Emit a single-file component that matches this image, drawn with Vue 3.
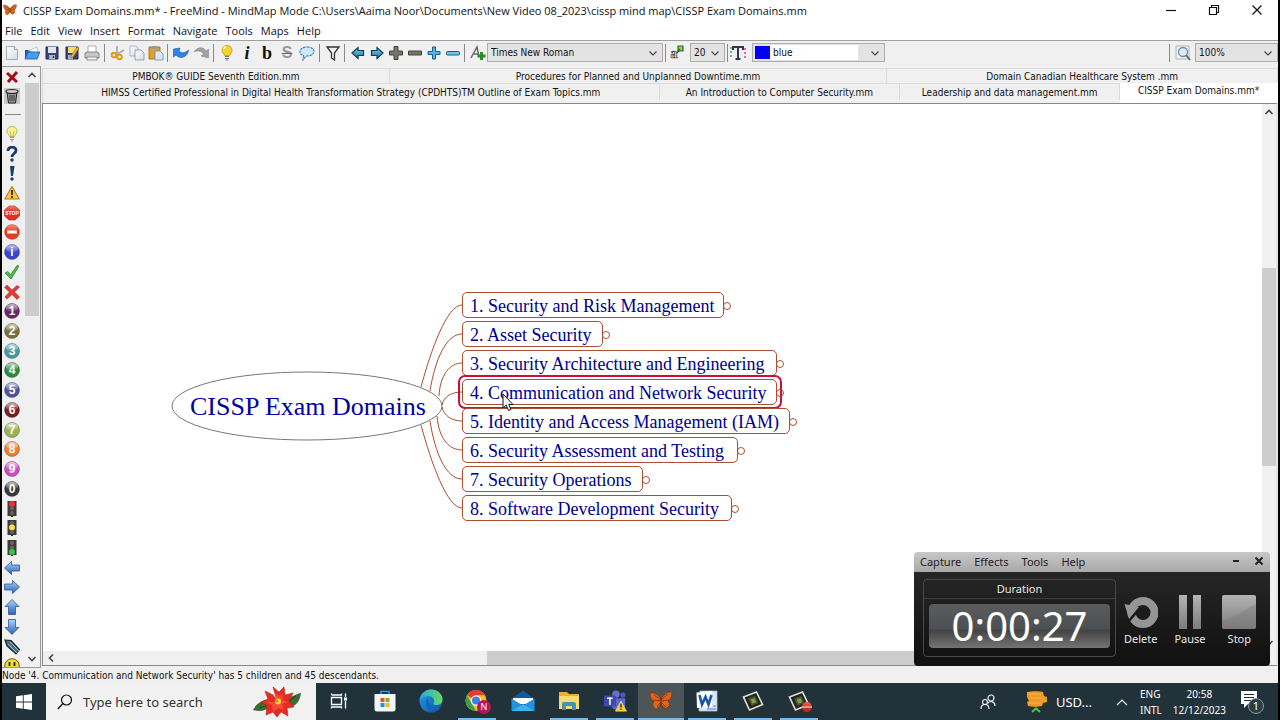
<template>
  <div class="desktop">
    <svg class="sprite" width="0" height="0" aria-hidden="true">
      <defs>
        <linearGradient id="gBlue" x1="0" y1="0" x2="0" y2="1">
          <stop offset="0" stop-color="#a8d4fa" />
          <stop offset="1" stop-color="#2a62b8" />
        </linearGradient>
        <linearGradient id="gTeal" x1="0" y1="0" x2="0" y2="1">
          <stop offset="0" stop-color="#7cc8e8" />
          <stop offset="1" stop-color="#1e78a8" />
        </linearGradient>
        <linearGradient id="gGrey" x1="0" y1="0" x2="0" y2="1">
          <stop offset="0" stop-color="#b4b4b4" />
          <stop offset="1" stop-color="#7c7c7c" />
        </linearGradient>
        <linearGradient id="gShine" x1="0" y1="0" x2="0" y2="1">
          <stop offset="0" stop-color="#fff" stop-opacity=".7" />
          <stop offset="1" stop-color="#fff" stop-opacity="0" />
        </linearGradient>
        <linearGradient id="gPage" x1="0" y1="0" x2="1" y2="1">
          <stop offset="0" stop-color="#fff" />
          <stop offset="1" stop-color="#d4dae6" />
        </linearGradient>
        <linearGradient id="gEdge" x1="0" y1="0" x2="1" y2="1">
          <stop offset="0" stop-color="#2ba0e8" />
          <stop offset="1" stop-color="#0c4fa0" />
        </linearGradient>
        <linearGradient id="gEdgeTop" x1="0" y1="0" x2="1" y2="0">
          <stop offset="0" stop-color="#2aa8e0" />
          <stop offset="1" stop-color="#64d860" />
        </linearGradient>
      </defs>

      <symbol id="butterfly" viewBox="0 0 24 20">
        <path d="M12 8C9 3 5 1 1 2c0 4 1 7 4 8-2 3-1 7 2 8 2 0 4-3 5-6 1 3 3 6 6 5 3-2 3-5 1-7 3-2 4-5 4-9-4-1-8 2-11 7z" fill="#e0661c" stroke="#7a3410" stroke-width=".8" />
        <path d="M12 7v8M12 9 5 4M12 10 5 9M12 11l-4 5M12 9l7-6M12 10l8-1M12 11l5 5" stroke="#7a2c08" stroke-width=".8" fill="none" />
      </symbol>
      <symbol id="new" viewBox="0 0 16 16">
        <path d="M2.500 1.500h8l3 3v10h-11z" fill="url(#gPage)" stroke="#a4aab8" />
        <path d="M10.500 1.500v3h3" fill="#fff" stroke="#a4aab8" />
      </symbol>
      <symbol id="open" viewBox="0 0 16 16">
        <path d="M1 13V5h5l1 2h6v6z" fill="#1e5cb0" />
        <path d="M4 6 13 2l1 6z" fill="#fff" stroke="#8ab" stroke-width=".6" />
        <path d="M1 14 4 7h12l-3 7z" fill="#4a9cf0" stroke="#1c58a8" stroke-width=".8" />
      </symbol>
      <symbol id="save" viewBox="0 0 16 16">
        <path d="M2 2h12v12H2z" fill="#3c4474" stroke="#242a4c" />
        <path d="M4 2h8v6H4z" fill="#dfe4f0" />
        <path d="M5 10h6v4H5z" fill="#aab0c4" />
        <path d="M9 11h1v2H9z" fill="#222" />
      </symbol>
      <symbol id="saveas" viewBox="0 0 16 16">
        <path d="M2 2h12v12H2z" fill="#3c4474" stroke="#242a4c" />
        <path d="M4 2h8v6H4z" fill="#f2dc78" />
        <path d="M4 10h5v4H4z" fill="#aab0c4" />
        <path d="m7 11 6-9 2 1-6 9-2 1z" fill="#f4b828" stroke="#96640c" stroke-width=".6" />
      </symbol>
      <symbol id="print" viewBox="0 0 16 16">
        <path d="M4 1h8v7H4z" fill="#fff" stroke="#999" stroke-width=".8" />
        <path d="M1 8l2-1h10l2 1v5H1z" fill="#c8c8c8" stroke="#707070" stroke-width=".8" />
        <path d="M3 12h10v3H3z" fill="#f0f0f0" stroke="#808080" stroke-width=".8" />
      </symbol>
      <symbol id="cut" viewBox="0 0 16 16">
        <path d="M7 1v8M14 5 6 10" stroke="#a4acb8" stroke-width="1.800" />
        <circle cx="4" cy="10" r="2.300" fill="none" stroke="#e09a1c" stroke-width="2" />
        <circle cx="9.500" cy="12" r="2.300" fill="none" stroke="#e09a1c" stroke-width="2" />
      </symbol>
      <symbol id="copy" viewBox="0 0 16 16">
        <path d="M1 1h6l2 2v8H1z" fill="url(#gPage)" stroke="#9aa2b8" stroke-width=".8" />
        <path d="M6 5h6l3 3v7H6z" fill="url(#gPage)" stroke="#8890a8" stroke-width=".8" />
      </symbol>
      <symbol id="paste" viewBox="0 0 16 16">
        <path d="M1 2h11v12H1z" fill="#e0a030" stroke="#986418" stroke-width=".8" />
        <path d="M4 1h5v3H4z" fill="#9a9a9a" />
        <path d="M7 6h5l3 3v6H7z" fill="#dce8fa" stroke="#7088b0" stroke-width=".8" />
      </symbol>
      <symbol id="undo" viewBox="0 0 16 16">
        <path d="M.5 4 7 3 6 6c3 3 6 2 9.500-1C15 12 7 15 3 10L.5 12z" fill="#2c84e4" stroke="#1858b0" stroke-width=".6" />
      </symbol>
      <symbol id="redo" viewBox="0 0 16 16">
        <path d="M1 7c3-5 9-6 12-1l2.500-2v9L8 11l2.500-2C9 6 5 5 1 7z" fill="#a0a0a0" stroke="#888" stroke-width=".6" />
      </symbol>
      <symbol id="bulb" viewBox="0 0 16 16">
        <path d="M8 .5c-3 0-5 2-5 5 0 2 2 3 2.500 5h5C11 8.500 13 7.500 13 5.500c0-3-2-5-5-5z" fill="#f8d428" stroke="#c09410" stroke-width=".8" />
        <path d="M5 4c0-1 1-2 2-2" stroke="#fff" stroke-width="1.500" fill="none" />
        <path d="M6 11.500h4M6 13.500h4M7 15h2" stroke="#777" stroke-width="1.200" />
      </symbol>
      <symbol id="bulblight" viewBox="0 0 16 16">
        <path d="M8 .5c-3 0-5 2-5 5 0 2 2 3 2.500 5h5C11 8.500 13 7.500 13 5.500c0-3-2-5-5-5z" fill="#f8f490" stroke="#b0a840" stroke-width=".8" />
        <path d="M6 5l1 5M10 5l-1 5" stroke="#b8a840" stroke-width=".8" />
        <path d="M6 11.500h4M6 13.500h4M7 15h2" stroke="#999" stroke-width="1.200" />
      </symbol>
      <symbol id="cloud" viewBox="0 0 16 16">
        <path d="M8 2c4 0 7 2 7 4.500S12 11 8 11l-1 0-3 4 .5-4.500C2 10 1 8.500 1 6.500 1 4 4 2 8 2z" fill="#cfe8f8" stroke="#3a7cb0" stroke-width="1.100" stroke-dasharray="2.500 .8" />
      </symbol>
      <symbol id="filter" viewBox="0 0 16 16">
        <path d="M2 2h12L9.500 8v7L6.500 13V8z" fill="#eee" stroke="#333" stroke-width="1.300" />
      </symbol>
      <symbol id="left" viewBox="0 0 16 16">
        <path d="m2 8 6-5.500V5.500h5.500v5H8v3z" fill="url(#gTeal)" stroke="#0e3c5c" stroke-width="1.200" />
      </symbol>
      <symbol id="right" viewBox="0 0 16 16">
        <path d="M14 8 8 2.500V5.500H2.500v5H8v3z" fill="url(#gTeal)" stroke="#0e3c5c" stroke-width="1.200" />
      </symbol>
      <symbol id="plusgrey" viewBox="0 0 16 16">
        <path d="M6 1.500h4V6h4.500v4H10v4.500H6V10H1.500V6H6z" fill="#77756a" stroke="#45443c" />
      </symbol>
      <symbol id="minusgrey" viewBox="0 0 16 16">
        <path d="M1.500 6h13v4h-13z" fill="#77756a" stroke="#45443c" />
      </symbol>
      <symbol id="plusblue" viewBox="0 0 16 16">
        <path d="M6.500 2h3v4.500H14v3H9.500V14h-3V9.500H2v-3h4.500z" fill="#5cb4e0" stroke="#185c88" />
      </symbol>
      <symbol id="minusblue" viewBox="0 0 16 16">
        <rect x="1.500" y="6.500" width="13" height="3.500" rx="1" fill="#7cc4e4" stroke="#185c88" />
      </symbol>
      <symbol id="fontadd" viewBox="0 0 16 16">
        <path d="M1 13 7 2l2 10M4 9h4" fill="none" stroke="#666" stroke-width="1.500" />
        <path d="M11.500 7v8M7.500 11h8" stroke="#2c8c2c" stroke-width="3" />
      </symbol>
      <symbol id="fontsize" viewBox="0 0 16 16">
        <path d="M10 1h5v5h-5z" fill="#9c6" stroke="#2c6c14" stroke-width="1.200" />
        <path d="m9 8 3-4" stroke="#2c6c14" stroke-width="1.500" />
      </symbol>
      <symbol id="textcolor" viewBox="0 0 16 16">
        <path d="M3 5V2h10v3M8 2v12M5.500 14h5" fill="none" stroke="#2c3c50" stroke-width="2" />
        <path d="M1 2v12" stroke="#4a4" stroke-width="1.500" stroke-dasharray="2 2" />
        <path d="M15 3v12" stroke="#d48" stroke-width="1.500" stroke-dasharray="2 2" />
      </symbol>
      <symbol id="zoompage" viewBox="0 0 16 16">
        <path d="M1 1h13v13H1z" fill="#f4f4f4" stroke="#9aa4b4" stroke-width=".8" />
        <circle cx="8" cy="7" r="4.500" fill="#d8ecfa" stroke="#7488a4" stroke-width="1.300" />
        <path d="m11 10 4 5" stroke="#667" stroke-width="2" />
      </symbol>
      <symbol id="cross" viewBox="0 0 16 16">
        <path d="m3 4 10 9M13 3 4 13" stroke="#a80c14" stroke-width="3" />
      </symbol>
      <symbol id="trash" viewBox="0 0 16 16">
        <path d="M0 0h16v16H0z" fill="#c8c8c8" />
        <path d="m3 4 1.500 11h7L13 4z" fill="#999" stroke="#222" />
        <ellipse cx="8" cy="3.500" rx="6" ry="2" fill="#ccc" stroke="#222" stroke-width="1.200" />
        <path d="M6 7v6M8 7v6M10 7v6" stroke="#333" />
      </symbol>
      <symbol id="question" viewBox="0 0 16 16">
        <path d="M4 5c0-5 8-5 8-.5C12 7.500 8 7.500 8 11" fill="none" stroke="#1c3c68" stroke-width="2.800" />
        <circle cx="8" cy="14" r="1.700" fill="#1c3c68" />
      </symbol>
      <symbol id="bang" viewBox="0 0 16 16">
        <path d="M6 1h4.500L9 11H7z" fill="#1c3c68" />
        <circle cx="8" cy="14" r="1.700" fill="#1c3c68" />
      </symbol>
      <symbol id="warn" viewBox="0 0 16 16">
        <path d="M8 1.500 15.200 14H.8z" fill="#f8c848" stroke="#b87c18" stroke-width="1.100" stroke-linejoin="round" />
        <path d="M8 5v5M8 11v2" stroke="#222" stroke-width="1.700" />
      </symbol>
      <symbol id="stopsign" viewBox="0 0 16 16">
        <path d="M5 1h6l4.500 4v6L11 15H5L.5 11V5z" fill="#e03028" stroke="#b01c18" stroke-width=".6" />
        <path d="M5 1h6l4 4v2H1V5z" fill="url(#gShine)" opacity=".5" />
      </symbol>
      <symbol id="noentry" viewBox="0 0 16 16">
        <circle cx="8" cy="8" r="7.300" fill="#e83c20" stroke="#b82c18" stroke-width=".6" />
        <rect x="3" y="6.500" width="10" height="3" fill="#fff" />
        <ellipse cx="8" cy="4.500" rx="5.500" ry="3.500" fill="url(#gShine)" opacity=".6" />
      </symbol>
      <symbol id="check" viewBox="0 0 16 16">
        <path d="m1 9 3-1.500L6.500 11 13 1.500 15 2 7 15z" fill="#48c048" stroke="#1c7c24" stroke-width=".7" />
      </symbol>
      <symbol id="redx" viewBox="0 0 16 16">
        <path d="M.5 3.500 3 1l5 5 5-4.500L15.500 3 10.500 8l5 5-2.500 2.500-5-5-5 4.500-2-2L5.500 8z" fill="#dc3c38" stroke="#b02424" stroke-width=".6" />
      </symbol>
      <symbol id="arrowleft" viewBox="0 0 16 16">
        <path d="M.5 8 7.500 1.500v3.500h8v6h-8v3.500z" fill="url(#gBlue)" stroke="#30588c" stroke-width=".8" />
      </symbol>
      <symbol id="arrowright" viewBox="0 0 16 16">
        <path d="M15.500 8 8.500 1.500v3.500h-8v6h8v3.500z" fill="url(#gBlue)" stroke="#30588c" stroke-width=".8" />
      </symbol>
      <symbol id="arrowup" viewBox="0 0 16 16">
        <path d="M8 .5 15 7.500h-3.500v8h-7v-8H1z" fill="url(#gBlue)" stroke="#30588c" stroke-width=".8" />
      </symbol>
      <symbol id="arrowdown" viewBox="0 0 16 16">
        <path d="M8 15.500 15 8.500h-3.500v-8h-7v8H1z" fill="url(#gBlue)" stroke="#30588c" stroke-width=".8" />
      </symbol>
      <symbol id="pencil" viewBox="0 0 16 16">
        <path d="m1 1 6 .5 8.500 9-3.500 4.500L3 7z" fill="#4a6c7c" stroke="#142430" stroke-width="1.200" />
        <path d="m4 5 9 9M6 3l9 9" stroke="#bcd0d8" stroke-width=".8" />
      </symbol>
      <symbol id="smile" viewBox="0 0 16 16">
        <circle cx="8" cy="8" r="7.300" fill="#f4dc30" stroke="#6c5c08" stroke-width="1" />
        <path d="M5.500 4v4M10.500 4v4" stroke="#222" stroke-width="1.800" />
        <path d="M4 10c2 3 6 3 8 0" stroke="#222" fill="none" />
      </symbol>
      <symbol id="search" viewBox="0 0 16 16">
        <circle cx="9.500" cy="6" r="5" fill="none" stroke="#111" stroke-width="1.200" />
        <path d="M6 9.500.8 15" stroke="#111" stroke-width="1.300" />
      </symbol>
      <symbol id="poinsettia" viewBox="0 0 50 32">
        <path d="M16 14C8 14 3 20 1 24c7 2 13 1 17-4zM34 12c6-1 10-4 15-5-1 8-5 14-13 14z" fill="#3c6c34" />
        <path d="M8 22l10-4M44 10l-8 6" stroke="#1c4420" />
        <path d="m25 15-4-14 6 5 5-5 1 8 8-2-4 8 5 6-7 1 1 8-7-4-4 5-4-5-7 3 1-9-6-4 7-3-3-8 8 4z" fill="#e42c20" stroke="#c01c14" stroke-width=".6" />
        <path d="m25 16-2-9 4 3 4-3-1 7 6 2-6 2 2 6-6-2-5 4-1-7-6-3z" fill="#f44c38" />
        <circle cx="26" cy="15.500" r="3" fill="#f4cc30" />
        <circle cx="25" cy="15" r="1" fill="#a06c10" />
      </symbol>
      <symbol id="windows" viewBox="0 0 16 16">
        <path d="M0 2.300 6.800 1.300v6.200H0zM7.700 1.200 16 0v7.500H7.700zM0 8.400h6.800v6.300L0 13.700zM7.700 8.400H16V16l-8.300-1.200z" fill="#fff" />
      </symbol>
      <symbol id="taskview" viewBox="0 0 24 24">
        <path d="M4.500 8.500h10v7h-10zM4.500 6V4.500M4.500 6h10V4.500M4.500 19.500V18h10v1.500" fill="none" stroke="#fff" stroke-width="1.300" />
        <path d="M18.500 4.500V8M18.500 12v7.500" stroke="#fff" stroke-width="1.300" />
        <path d="M17 8.500h3v3h-3z" fill="#fff" />
      </symbol>
      <symbol id="store" viewBox="0 0 24 24">
        <path d="M8 6V2.500h8V6" fill="none" stroke="#2a9ce0" stroke-width="1.600" />
        <path d="M1.500 5h21v15a2.500 2.500 0 0 1-2.500 2.500H4A2.500 2.500 0 0 1 1.500 20z" fill="#f4f6f8" />
        <path d="M7.500 9h4v4h-4z" fill="#e85428" />
        <path d="M12.500 9h4v4h-4z" fill="#84b41c" />
        <path d="M7.500 14h4v4h-4z" fill="#1c94dc" />
        <path d="M12.500 14h4v4h-4z" fill="#f4b41c" />
      </symbol>
      <symbol id="edge" viewBox="0 0 24 24">
        <circle cx="12" cy="12" r="11.500" fill="url(#gEdge)" />
        <path d="M.6 11C2 4 7 .5 12 .5c7 0 12 5 11.500 10.500-.3 4-4 5.500-7.500 5-2-.3-2-1.500-1-3C16 10 13 6.500 9 7c-4 .5-7 2-8.400 4z" fill="url(#gEdgeTop)" />
        <path d="M9 9c-4 4-2 11 4 13 4 0 7-2 8.500-4-6 2.500-13-1-12.500-9z" fill="#1264b8" />
      </symbol>
      <symbol id="chrome" viewBox="0 0 24 24">
        <circle cx="11" cy="11.500" r="10.500" fill="#fbbc1c" />
        <path d="M11 11.500 1.900 6.300A10.500 10.500 0 0 1 20.100 6.300H11z" fill="#e43c30" />
        <path d="M1.900 6.300 7 15l4 7A10.500 10.500 0 0 1 1.900 6.300z" fill="#34a050" />
        <circle cx="11" cy="11.500" r="5.200" fill="#fff" />
        <circle cx="11" cy="11.500" r="4" fill="#3c80e8" />
      </symbol>
      <symbol id="mail" viewBox="0 0 24 24">
        <path d="M.5 10 12 1.500 23.500 10v4H.5z" fill="#0c5ca4" />
        <path d="M2 9h20v6H2z" fill="#fff" />
        <path d="M.5 9.500 12 16.500l11.500-7V22H.5z" fill="#1c94e0" />
        <path d="M.5 22 12 15l11.500 7z" fill="#38b4f0" />
      </symbol>
      <symbol id="explorer" viewBox="0 0 24 24">
        <path d="M2 3h8l2 2h10v15H2z" fill="#e8b030" />
        <path d="M2 7h20v13H2z" fill="#fcd870" />
        <path d="M5 21v-6a2 2 0 0 1 2-2h10a2 2 0 0 1 2 2v6h-4v-4H9v4z" fill="#3c94b8" />
      </symbol>
      <symbol id="teams" viewBox="0 0 26 24">
        <circle cx="14" cy="4.500" r="4" fill="#6870d0" />
        <circle cx="21.500" cy="5.500" r="2.800" fill="#5058c0" />
        <path d="M8 9h16v7c0 4-3 6-7 6s-8-2-8-6z" fill="#6068cc" />
        <rect x="1" y="6" width="13" height="12" rx="1.500" fill="#4048b0" />
        <path d="M4.500 9h6M7.500 9v7" stroke="#fff" stroke-width="1.700" />
        <path d="M19.500 12 25.500 23h-12z" fill="#f8c828" stroke="#fbe9a0" stroke-width=".6" />
        <path d="M19.500 15v4M19.500 20v1.500" stroke="#222" stroke-width="1.400" />
      </symbol>
      <symbol id="word" viewBox="0 0 24 24">
        <path d="M5 2h17v20H4z" fill="#dce8f6" stroke="#a8bcd8" stroke-width=".8" />
        <path d="M1.500 3.500 17 2v16l-15 1z" fill="#fff" />
        <path d="m4.500 6 2.500 9.500L10.500 8l3 7.500L16.500 6" fill="none" stroke="#1c54a4" stroke-width="2.600" />
        <path d="M12 20h9M18 17h3" stroke="#7ca4d8" stroke-width="1.500" />
      </symbol>
      <symbol id="camtasia" viewBox="0 0 24 24">
        <path d="M2.500 8 15.500 3l6 12.500L8.500 21z" fill="#20241c" stroke="#dcdcd4" stroke-width="1.700" />
        <path d="M7 9.500 14 7l3.500 7-7 3z" fill="#44582c" />
        <path d="m10 10 4-.5 1 4-4 1z" fill="#88984c" />
      </symbol>
      <symbol id="people" viewBox="0 0 16 16">
        <circle cx="11" cy="4" r="3" fill="none" stroke="#eee" stroke-width="1.200" />
        <circle cx="5" cy="8" r="2.500" fill="none" stroke="#eee" stroke-width="1.200" />
        <path d="M1 15c0-6 8-6 8 0M8 9c3-3 7-1 7 3" fill="none" stroke="#eee" stroke-width="1.200" />
      </symbol>
      <symbol id="coins" viewBox="0 0 22 22">
        <path d="M2 1c5-1 13-1 16 0l1 4 3 1v5l-4 1-1 3c-4 1-10 1-14 0l-1-4 2-1-2-4z" fill="#f09a24" />
        <path d="M4 3h12M5 7h14M4 12h12" stroke="#f6ac40" stroke-width="1.500" />
        <path d="m7 21 4-3.500 4 3.500" fill="none" stroke="#54c42c" stroke-width="2.200" />
      </symbol>
      <symbol id="notes" viewBox="0 0 26 26">
        <path d="M2 2h16v13h-9l-4 4v-4H2z" fill="#fff" />
        <path d="M5 5.500h10M5 8.500h10M5 11.500h7" stroke="#1c2c34" stroke-width="1.200" />
      </symbol>
      <symbol id="chevdown" viewBox="0 0 10 10">
        <path d="m1.500 3.500 3.500 3.500 3.500-3.500" fill="none" stroke="#444" stroke-width="1.200" />
      </symbol>
      <symbol id="chevup" viewBox="0 0 10 10">
        <path d="m1.500 7 3.500-3.500L8.500 7" fill="none" stroke="currentColor" stroke-width="1.600" />
      </symbol>
    </svg>

    <header class="titlebar">
      <svg class="app-icon"><use href="#butterfly" /></svg>
      <span class="title">CISSP Exam Domains.mm* - FreeMind - MindMap Mode C:\Users\Aaima Noor\Documents\New Video 08_2023\cissp mind map\CISSP Exam Domains.mm</span>
      <div class="window-buttons">
        <button aria-label="Minimize">
          <svg viewBox="0 0 12 12"><path d="M1 6.500h10" /></svg>
        </button>
        <button aria-label="Restore">
          <svg viewBox="0 0 12 12"><path d="M1.500 3.500h7v7h-7zM3.500 3.500v-2h7v7h-2" /></svg>
        </button>
        <button aria-label="Close">
          <svg viewBox="0 0 12 12"><path d="m1.500 1.500 9 9M10.500 1.500l-9 9" /></svg>
        </button>
      </div>
    </header>

    <nav class="menubar">
      <button v-for="item in menus" :key="item">{{ item }}</button>
    </nav>

    <div class="toolbar">
      <div v-for="(group, i) in toolGroups" :key="i" class="tools" :class="{ tight: group.tight }">
        <button v-for="icon in group.icons" :key="icon" :aria-label="icon">
          <span v-if="letters[icon]" class="letter" :class="icon">{{ letters[icon] }}</span>
          <svg v-else class="icon"><use :href="'#' + icon" /></svg>
        </button>
      </div>
      <label class="combo combo-font">
        <select v-model="font" aria-label="Font">
          <option>Times New Roman</option>
        </select>
        <svg class="chev"><use href="#chevdown" /></svg>
      </label>
      <div class="tools tool-pre">
        <button aria-label="Font size">
          <svg class="icon" viewBox="0 0 16 16">
            <text x="6" y="13" text-anchor="middle" font-family="Liberation Serif, serif" font-size="14" font-weight="bold" fill="#ddd" stroke="#444" stroke-width=".7">a</text>
            <use href="#fontsize" />
          </svg>
        </button>
      </div>
      <label class="combo combo-size">
        <select v-model="size" aria-label="Size">
          <option>20</option>
        </select>
        <svg class="chev"><use href="#chevdown" /></svg>
      </label>
      <div class="tools tool-pre">
        <button aria-label="Text color"><svg class="icon"><use href="#textcolor" /></svg></button>
      </div>
      <label class="combo combo-color">
        <span class="swatch"></span>
        <select v-model="color" aria-label="Color">
          <option>blue</option>
        </select>
        <svg class="chev"><use href="#chevdown" /></svg>
      </label>
      <div class="tools tool-zoom">
        <button aria-label="Zoom"><svg class="icon"><use href="#zoompage" /></svg></button>
      </div>
      <label class="combo combo-zoom">
        <select v-model="zoom" aria-label="Zoom level">
          <option>100%</option>
        </select>
        <svg class="chev"><use href="#chevdown" /></svg>
      </label>
    </div>

    <div class="workspace">
      <aside class="sidebar">
        <div class="palette">
          <div class="palette-top">
            <button aria-label="Remove last icon"><svg class="icon"><use href="#cross" /></svg></button>
            <button aria-label="Remove all icons"><svg class="icon"><use href="#trash" /></svg></button>
          </div>
          <hr />
          <div class="palette-list">
            <button v-for="(item, i) in palette" :key="i" :aria-label="item.name">
              <svg v-if="item.ball" class="icon" viewBox="0 0 16 16">
                <circle cx="8" cy="8" r="7.500" :fill="item.ball" stroke="#444" stroke-opacity=".5" stroke-width=".8" />
                <ellipse cx="8" cy="5" rx="6" ry="4" fill="url(#gShine)" />
                <text x="8" y="12" text-anchor="middle" font-family="Liberation Sans, sans-serif" font-size="12" font-weight="bold" fill="#fff">{{ item.text }}</text>
              </svg>
              <svg v-else-if="item.light" class="icon" viewBox="0 0 16 16">
                <rect x="3.500" y="0" width="9" height="15" fill="#3c3c34" />
                <path d="M7 15h2v1H7z" fill="#222" />
                <circle v-for="n in 3" :key="n" cx="8" :cy="n * 4.500 - 1.500" :r="n === item.lit ? 3 : 2" :fill="n === item.lit ? item.light : '#66665c'" />
              </svg>
              <svg v-else class="icon" viewBox="0 0 16 16">
                <use :href="'#' + item.name" />
                <text v-if="item.text" x="8" y="10" text-anchor="middle" font-family="Liberation Sans, sans-serif" font-size="5" font-weight="bold" fill="#fff">{{ item.text }}</text>
              </svg>
            </button>
          </div>
        </div>
        <div class="vscroll side-scroll">
          <svg class="arrow"><use href="#chevup" /></svg>
          <div class="track"><div class="thumb"></div></div>
          <svg class="arrow flip"><use href="#chevup" /></svg>
        </div>
      </aside>

      <main class="document">
        <div class="tabs tabs-top">
          <button v-for="tab in topTabs" :key="tab">{{ tab }}</button>
        </div>
        <div class="tabs tabs-bottom">
          <button v-for="tab in bottomTabs" :key="tab" :class="{ active: tab === currentTab }">{{ tab }}</button>
        </div>

        <div class="pane">
          <div class="canvas">
            <svg class="edges" width="800" height="500">
              <ellipse cx="264" cy="302" rx="135" ry="34" fill="#fff" stroke="#777" />
              <path v-for="d in edges" :key="d" :d="d" fill="none" stroke="#a85030" />
            </svg>
            <div class="root-node">CISSP Exam Domains</div>
            <ul class="nodes">
              <li
                v-for="node in nodes"
                :key="node.text"
                :class="{ selected: node.text === selected }"
                :style="{ width: node.width + 'px' }"
                @click="selected = node.text"
              >{{ node.text }}</li>
            </ul>
            <svg class="cursor" viewBox="0 0 12 19">
              <path d="M1 1v14l3.200-3L6.500 17.500 9 16.500 6.700 11.500H11z" fill="#fff" stroke="#111" />
            </svg>
          </div>
          <div class="vscroll map-scroll">
            <svg class="arrow"><use href="#chevup" /></svg>
            <div class="track"><div class="thumb"></div></div>
            <svg class="arrow flip"><use href="#chevup" /></svg>
          </div>
          <div class="hscroll">
            <svg class="arrow turn"><use href="#chevup" /></svg>
            <div class="thumb"></div>
          </div>
        </div>
      </main>
    </div>

    <footer class="status">Node '4. Communication and Network Security' has 5 children and 45 descendants.</footer>

    <section class="recorder">
      <div class="rec-menu">
        <button v-for="item in recMenus" :key="item">{{ item }}</button>
        <button class="rec-min" aria-label="Minimize recorder"><svg viewBox="0 0 10 10"><path d="M2 5h6" /></svg></button>
        <button class="rec-close" aria-label="Close recorder"><svg viewBox="0 0 10 10"><path d="m1.500 1.500 7 7M8.500 1.500l-7 7" /></svg></button>
      </div>
      <div class="rec-body">
        <div class="duration">
          <div class="duration-label">Duration</div>
          <div class="clock">0:00:27</div>
        </div>
        <button class="rec-btn">
          <svg viewBox="0 0 34 34">
            <circle cx="19" cy="17.500" r="11.500" fill="none" stroke="#959595" stroke-width="8" />
            <path d="M16 12 3 27" stroke="#181818" stroke-width="4" />
            <path d="M.5 9 15 12 5 24z" fill="#959595" />
          </svg>
          Delete
        </button>
        <button class="rec-btn">
          <svg viewBox="0 0 34 34"><path d="M6 0h8v34H6zM20 0h8v34h-8z" fill="url(#gGrey)" /></svg>
          Pause
        </button>
        <button class="rec-btn">
          <svg viewBox="0 0 34 34">
            <rect width="34" height="34" rx="2" fill="url(#gGrey)" />
            <path d="M0 26C10 24 24 14 34 9v23a2 2 0 0 1-2 2H2a2 2 0 0 1-2-2z" fill="#777" opacity=".4" />
          </svg>
          Stop
        </button>
      </div>
    </section>

    <footer class="taskbar">
      <button class="start" aria-label="Start"><svg><use href="#windows" /></svg></button>
      <label class="search">
        <svg class="search-icon"><use href="#search" /></svg>
        <input type="text" placeholder="Type here to search" aria-label="Search" />
        <svg class="flower"><use href="#poinsettia" /></svg>
      </label>
      <button v-for="app in apps" :key="app.name" class="app" :class="{ running: app.running, current: app.current }" :aria-label="app.name">
        <svg><use :href="'#' + app.icon" /></svg>
        <span v-if="app.profile" class="profile">{{ app.profile }}</span>
        <span v-if="app.recording" class="rec-badge"></span>
      </button>
      <div class="tray">
        <button class="people" aria-label="People"><svg><use href="#people" /></svg></button>
        <button class="currency"><svg><use href="#coins" /></svg>USD...</button>
        <button class="more" aria-label="Show hidden icons"><svg viewBox="0 0 12 8"><path d="m1 7 5-5 5 5" /></svg></button>
        <button class="lang"><span>ENG</span><span>INTL</span></button>
        <button class="time"><span>20:58</span><span>12/12/2023</span></button>
        <button class="notify" aria-label="Notifications">
          <svg><use href="#notes" /></svg>
          <span class="count">1</span>
        </button>
      </div>
    </footer>
  </div>
</template>

<script setup>
import { ref } from 'vue';

const menus = ['File', 'Edit', 'View', 'Insert', 'Format', 'Navigate', 'Tools', 'Maps', 'Help'];
const recMenus = ['Capture', 'Effects', 'Tools', 'Help'];

const font = ref('Times New Roman');
const size = ref('20');
const color = ref('blue');
const zoom = ref('100%');

const toolGroups = [
  { icons: ['new', 'open', 'save', 'saveas', 'print'] },
  { icons: ['cut', 'copy', 'paste'], tight: true },
  { icons: ['undo', 'redo'] },
  { icons: ['bulb', 'italic', 'bold', 'strike', 'cloud'] },
  { icons: ['filter'], tight: true },
  { icons: ['left', 'right', 'plusgrey', 'minusgrey', 'plusblue', 'minusblue'], tight: true },
  { icons: ['fontadd'], tight: true }
];
const letters = { italic: 'i', bold: 'b', strike: 'S' };

const palette = [
  { name: 'bulblight' },
  { name: 'question' },
  { name: 'bang' },
  { name: 'warn' },
  { name: 'stopsign', text: 'STOP' },
  { name: 'noentry' },
  { name: 'info', ball: '#3a44d0', text: 'i' },
  { name: 'check' },
  { name: 'redx' },
  { name: 'one', ball: '#6a2468', text: '1' },
  { name: 'two', ball: '#78703a', text: '2' },
  { name: 'three', ball: '#4498a0', text: '3' },
  { name: 'four', ball: '#2a8c3c', text: '4' },
  { name: 'five', ball: '#4c54a0', text: '5' },
  { name: 'six', ball: '#7a1c24', text: '6' },
  { name: 'seven', ball: '#98b44c', text: '7' },
  { name: 'eight', ball: '#f07c2c', text: '8' },
  { name: 'nine', ball: '#cc4cc8', text: '9' },
  { name: 'zero', ball: '#383838', text: '0' },
  { name: 'stop light', light: '#f03030', lit: 1 },
  { name: 'prepare light', light: '#f8e040', lit: 2 },
  { name: 'go light', light: '#30c850', lit: 3 },
  { name: 'arrowleft' },
  { name: 'arrowright' },
  { name: 'arrowup' },
  { name: 'arrowdown' },
  { name: 'pencil' },
  { name: 'smile' }
];

const topTabs = [
  'PMBOK® GUIDE Seventh Edition.mm',
  'Procedures for Planned and Unplanned Downtime.mm',
  'Domain Canadian Healthcare System .mm'
];
const bottomTabs = [
  'HIMSS Certified Professional in Digital Health Transformation Strategy (CPDHTS)TM Outline of Exam Topics.mm',
  'An Introduction to Computer Security.mm',
  'Leadership and data management.mm',
  'CISSP Exam Domains.mm*'
];
const currentTab = 'CISSP Exam Domains.mm*';

const nodes = [
  { text: '1. Security and Risk Management', width: 262 },
  { text: '2. Asset Security', width: 141 },
  { text: '3. Security Architecture and Engineering', width: 315 },
  { text: '4. Communication and Network Security', width: 315 },
  { text: '5. Identity and Access Management (IAM)', width: 328 },
  { text: '6. Security Assessment and Testing', width: 276 },
  { text: '7. Security Operations', width: 181 },
  { text: '8. Software Development Security', width: 270 }
];
const selected = ref(nodes[3].text);

// curves from the root ellipse to the left side of each node
const edges = [
  'M419 201C404 201 388 246 378 283',
  'M419 230C403 230 392 256 387 287',
  'M419 259C407 259 397 271 396 292',
  'M419 288C409 288 401 292 399 301',
  'M419 317C409 317 401 312 399 303',
  'M419 346C407 346 396 336 394 312',
  'M419 375C403 375 392 349 387 317',
  'M419 404C404 404 388 358 378 321'
];

const apps = [
  { name: 'Task View', icon: 'taskview' },
  { name: 'Store', icon: 'store' },
  { name: 'Edge', icon: 'edge' },
  { name: 'Chrome', icon: 'chrome', running: true, profile: 'N' },
  { name: 'Mail', icon: 'mail' },
  { name: 'File Explorer', icon: 'explorer', running: true },
  { name: 'Teams', icon: 'teams', running: true },
  { name: 'FreeMind', icon: 'butterfly', running: true, current: true },
  { name: 'Word', icon: 'word', running: true },
  { name: 'Camtasia', icon: 'camtasia', running: true },
  { name: 'Camtasia Recorder', icon: 'camtasia', running: true, recording: true }
];
</script>

<style>
body {
  margin: 0;
  overflow: hidden;
}
</style>

<style scoped>
* {
  box-sizing: border-box;
}

button {
  border: 0;
  margin: 0;
  padding: 0;
  background: none;
  font: inherit;
  color: inherit;
}

svg {
  display: block;
}

.sprite {
  position: absolute;
}

.desktop {
  position: relative;
  display: flex;
  flex-direction: column;
  height: 100vh;
  border-left: 2px solid #000;
  border-right: 2px solid #000;
  background: #f0f0f0;
  color: #111;
  font-family: "DejaVu Sans Condensed", "Noto Sans", sans-serif;
  font-size: 10px;
}

.titlebar {
  display: flex;
  align-items: center;
  height: 22px;
  padding-bottom: 2px;
  background: #fff;
  font-family: "Open Sans", "Noto Sans", sans-serif;
  font-size: 11px;
}

.app-icon {
  width: 14px;
  height: 14px;
  margin: 0 6px 0 1px;
}

.title {
  flex: 1;
  white-space: nowrap;
}

.window-buttons {
  display: flex;
}

.window-buttons button {
  display: flex;
  justify-content: center;
  width: 43px;
}

.window-buttons svg {
  width: 12px;
  height: 12px;
  fill: none;
  stroke: #111;
  stroke-width: 1.2;
}

.menubar {
  display: flex;
  align-items: center;
  gap: 8px;
  height: 18px;
  padding: 0 3px 2px;
  background: #fff;
  font-family: "Open Sans", "Noto Sans", sans-serif;
  font-size: 11px;
}

.toolbar {
  display: flex;
  align-items: center;
  height: 26px;
  padding-bottom: 2px;
  border-top: 1px solid #a0a0a0;
}

.tools {
  display: flex;
}

.tools button {
  display: flex;
  align-items: center;
  justify-content: center;
  width: 20px;
  height: 18px;
}

.tight button {
  width: 19px;
}

.tools + .tools,
.tool-zoom {
  padding-left: 3px;
  margin-left: 2px;
  border-left: 1px solid #888;
}

.tool-pre {
  margin: 0 4px 0 2px;
  border-left: 1px solid #888;
}

.icon {
  width: 16px;
  height: 16px;
}

.letter {
  font-family: "Liberation Serif", serif;
  font-size: 18px;
  font-weight: bold;
  line-height: 18px;
}

.italic {
  font-style: italic;
}

.strike {
  color: #999;
  font-family: "Liberation Sans", sans-serif;
  font-size: 16px;
  text-decoration: line-through #666;
}

.combo {
  display: flex;
  align-items: center;
  height: 19px;
  padding: 0 4px 0 3px;
  border: 1px solid #adadad;
  background: #e3e3e3;
}

.combo select {
  flex: 1;
  min-width: 0;
  height: 15px;
  padding: 0;
  border: 0;
  appearance: none;
  background: none;
  font: inherit;
  color: #111;
}

.chev {
  width: 10px;
  height: 10px;
}

.combo-font {
  width: 176px;
}

.combo-size {
  width: 35px;
}

.combo-color {
  width: 133px;
  padding-left: 1px;
}

.combo-color select {
  margin-right: 12px;
  padding-left: 3px;
  background: #fff;
}

.swatch {
  width: 15px;
  height: 13px;
  margin-left: 1px;
  background: #0000f8;
}

.tool-zoom {
  margin-left: auto;
}

.combo-zoom {
  width: 83px;
  margin-left: 2px;
}

.workspace {
  display: flex;
  flex: 1;
  min-height: 0;
}

.sidebar {
  display: flex;
  width: 39px;
  margin-bottom: 1px;
  border: 1px solid #999;
  border-left: 0;
  overflow: hidden;
}

.palette {
  display: flex;
  flex-direction: column;
  width: 23px;
  margin-bottom: -9px;
}

.palette button {
  display: flex;
  align-items: center;
  padding-left: 2px;
}

.palette-top button {
  height: 19px;
}

hr {
  width: 16px;
  margin: 9px 0 9px 3px;
  border: 0;
  border-top: 1px solid #888;
}

.palette-list {
  display: flex;
  flex: 1;
  flex-direction: column;
}

.palette-list button {
  flex: 1;
}

.vscroll {
  display: flex;
  flex-direction: column;
  align-items: center;
  background: #f0f0f0;
}

.side-scroll {
  width: 14px;
}

.arrow {
  width: 10px;
  height: 16px;
  color: #444;
}

.flip {
  transform: rotate(180deg);
}

.turn {
  transform: rotate(-90deg);
}

.track {
  display: grid;
  flex: 1;
  width: 100%;
}

.thumb {
  background: #cdcdcd;
}

.side-scroll .track {
  grid-template-rows: 234fr 336fr;
}

.document {
  display: flex;
  flex: 1;
  flex-direction: column;
  min-width: 0;
  padding: 2px 0 0 1px;
}

.tabs {
  display: grid;
  border-left: 1px solid #d9d9d9;
}

.tabs button {
  padding-top: 2px;
  border: 1px solid #dcdcdc;
  border-width: 1px 1px 0 0;
  white-space: nowrap;
  line-height: 12px;
}

.tabs-top {
  grid-template-columns: 347fr 498fr 391fr;
  height: 15px;
}

.tabs-bottom {
  grid-template-columns: 617fr 241fr 220fr 158fr;
  height: 20px;
}

.tabs-bottom button {
  height: 17px;
}

.tabs-bottom .active {
  height: 20px;
  padding: 0 0 6px;
  border-color: #fff;
  background: #fff;
}

.pane {
  display: grid;
  grid-template: 1fr 14px / 1fr 14px;
  flex: 1;
  min-height: 0;
  margin-bottom: 3px;
  border: 1px solid #888;
  border-right: 2px solid #e4e4e4;
  background: #f0f0f0;
}

.canvas {
  position: relative;
  overflow: hidden;
  background: #fff;
}

.edges {
  position: absolute;
  top: 0;
  left: 0;
}

.root-node {
  position: absolute;
  top: 286px;
  left: 130px;
  width: 270px;
  color: #0000a4;
  font-family: "Liberation Serif", serif;
  font-size: 26px;
  line-height: 34px;
  text-align: center;
  white-space: nowrap;
}

.nodes {
  position: absolute;
  top: 188px;
  left: 419px;
  display: flex;
  flex-direction: column;
  align-items: flex-start;
  gap: 3px;
  margin: 0;
  padding: 0;
  list-style: none;
  font-family: "Liberation Serif", serif;
  font-size: 18px;
}

.nodes li {
  position: relative;
  height: 26px;
  padding-left: 7px;
  border: 1px solid #a85030;
  border-radius: 5px;
  color: #00008c;
  line-height: 26px;
  white-space: nowrap;
}

.nodes li::after {
  content: "";
  position: absolute;
  top: 9px;
  left: 100%;
  width: 6px;
  height: 6px;
  border: 1px solid #a85030;
  border-radius: 50%;
}

.nodes .selected::before {
  content: "";
  position: absolute;
  inset: -5px -6px -5px -5px;
  border: 2px solid #d00c3c;
  border-radius: 7px;
}

.cursor {
  position: absolute;
  top: 289px;
  left: 459px;
  width: 12px;
  height: 19px;
}

.map-scroll .track {
  grid-template-rows: 148fr 198fr 169fr;
}

.map-scroll .thumb {
  grid-row: 2;
}

.hscroll {
  display: grid;
  grid-template-columns: 16px 428fr 500fr 275fr;
  align-items: center;
}

.hscroll .arrow {
  height: 10px;
  margin-left: 3px;
}

.hscroll .thumb {
  grid-column: 3;
  height: 100%;
}

.status {
  height: 14px;
  line-height: 14px;
  white-space: nowrap;
}

.recorder {
  position: absolute;
  right: 8px;
  bottom: 54px;
  width: 356px;
  border-radius: 4px;
  overflow: hidden;
  color: #e8e8e8;
  font-family: "Noto Sans", sans-serif;
  font-size: 11px;
}

.rec-menu {
  display: flex;
  align-items: center;
  gap: 13px;
  height: 20px;
  padding: 0 6px 2px;
  background: linear-gradient(#c8c8c8, #a8a8a8);
  color: #222;
}

.rec-menu svg {
  width: 10px;
  height: 10px;
  stroke: #222;
  stroke-width: 2;
}

.rec-min {
  margin-left: auto;
}

.rec-body {
  display: flex;
  height: 94px;
  padding: 7px 6px 9px 9px;
  background: linear-gradient(#262626, #101010);
}

.duration {
  width: 193px;
  height: 78px;
  border: 1px solid #484848;
  border-radius: 4px;
  text-align: center;
}

.duration-label {
  height: 19px;
  border-bottom: 1px solid #3c3c3c;
  line-height: 18px;
}

.clock {
  height: 44px;
  margin: 5px;
  border-radius: 4px;
  background: linear-gradient(#5c5c5c, #4c5054 55%, #444 60%, #747474);
  color: #fff;
  font-size: 40px;
  line-height: 44px;
}

.rec-btn {
  display: flex;
  flex: 1;
  flex-direction: column;
  align-items: center;
  gap: 2px;
  padding-top: 16px;
}

.rec-btn svg {
  width: 34px;
  height: 34px;
}

.taskbar {
  display: flex;
  height: 37px;
  background: #22323a;
  color: #fff;
  font-family: "Noto Sans", sans-serif;
}

.start {
  display: flex;
  align-items: center;
  justify-content: center;
  width: 44px;
}

.start svg {
  width: 16px;
  height: 16px;
}

.search {
  display: flex;
  align-items: center;
  width: 270px;
  padding: 0 14px 0 11px;
  background: #f2f2f2;
}

.search-icon {
  width: 16px;
  height: 16px;
}

.search input {
  flex: 1;
  min-width: 0;
  padding: 0 0 0 10px;
  border: 0;
  background: none;
  font: inherit;
  font-size: 13px;
}

.search input::placeholder {
  color: #333;
}

.flower {
  width: 50px;
  height: 32px;
}

.app {
  position: relative;
  display: flex;
  align-items: center;
  justify-content: center;
  width: 46px;
  border-bottom: 2px solid transparent;
}

.app svg {
  width: 24px;
  height: 24px;
}

.app.running {
  background: linear-gradient(#76b9ed, #76b9ed) center bottom / 38px 2px no-repeat border-box;
}

.app.current {
  border-bottom-color: #76b9ed;
  background: #4c5658;
}

.profile {
  position: absolute;
  right: 9px;
  bottom: 4px;
  width: 14px;
  height: 14px;
  border-radius: 50%;
  background: #b8145c;
  font-size: 9px;
  line-height: 14px;
}

.rec-badge {
  position: absolute;
  right: 10px;
  bottom: 6px;
  width: 10px;
  height: 10px;
  border-radius: 50%;
  background: linear-gradient(#e86858, #e03c30 40%, #f0d0cc 50%, #c02c20 65%);
}

.tray {
  display: flex;
  flex: 1;
  align-items: center;
  justify-content: flex-end;
  padding-right: 13px;
}

.people svg {
  width: 16px;
  height: 16px;
}

.currency {
  display: flex;
  align-items: center;
  gap: 9px;
  margin-left: 29px;
  font-size: 13px;
}

.currency svg {
  width: 22px;
  height: 22px;
}

.more {
  margin-left: 24px;
}

.more svg {
  width: 12px;
  height: 8px;
  fill: none;
  stroke: #fff;
  stroke-width: 1.2;
}

.lang,
.time {
  display: flex;
  flex-direction: column;
  align-items: center;
  font-size: 10px;
  line-height: 16px;
}

.lang {
  align-items: flex-start;
  margin-left: 12px;
}

.time {
  margin: 0 13px 0 11px;
}

.notify {
  position: relative;
}

.notify svg {
  width: 26px;
  height: 26px;
}

.count {
  position: absolute;
  right: 1px;
  bottom: 1px;
  width: 16px;
  height: 16px;
  border: 1px solid #8c989c;
  border-radius: 50%;
  background: #2c3c44;
  font-size: 11px;
  line-height: 14px;
}
</style>
